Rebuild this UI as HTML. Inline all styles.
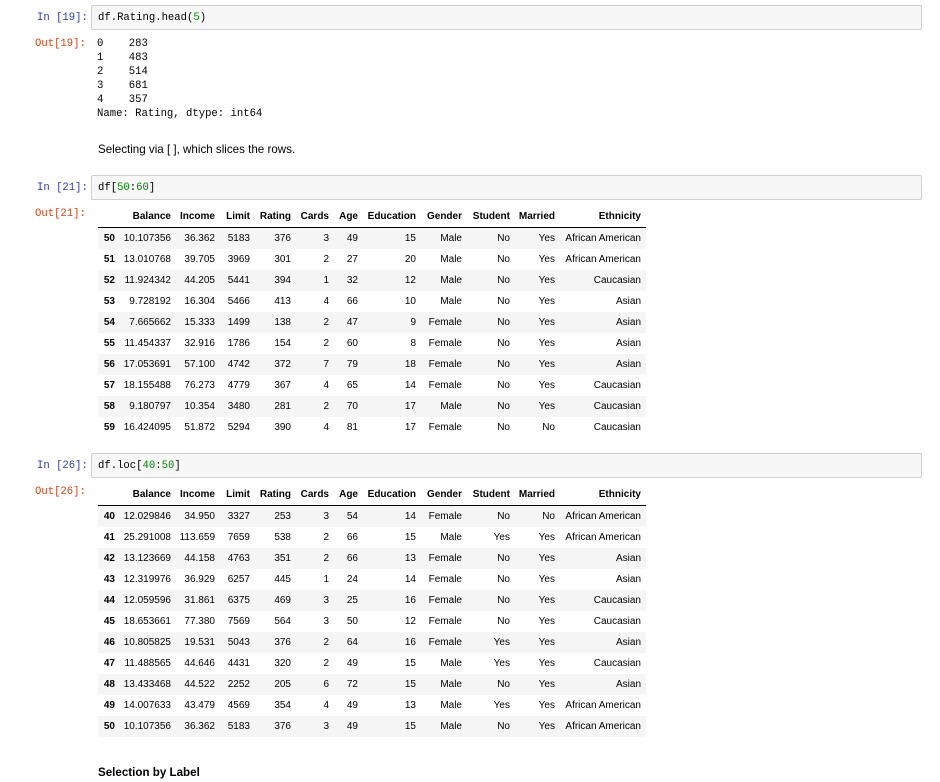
<!DOCTYPE html>
<html><head><style>
body{margin:0;background:#fff;width:940px;height:782px;position:relative;overflow:hidden;font-family:"Liberation Sans",Arial,sans-serif}
.p{position:absolute;font-family:"Liberation Mono",monospace;font-size:10.6px;line-height:14px}
.in{color:#303f9f;left:37px}
.out{color:#d84315;left:35px}
.box{position:absolute;left:91px;width:829px;height:23px;border:1px solid #cfcfcf;background:#f7f7f7;border-radius:2px}
.box>span{position:absolute;left:6px;top:5px;font-family:"Liberation Mono",monospace;font-size:10.6px;line-height:14px;color:#000}
.g{color:#008800}
pre{position:absolute;left:97px;top:37px;margin:0;font-family:"Liberation Mono",monospace;font-size:10.6px;line-height:14px}
table{position:absolute;left:98px;border-collapse:collapse;table-layout:fixed;font-size:10px;width:548px}
td,th{text-align:right;padding:0 5px 0 0;height:21px;white-space:nowrap;overflow:visible}
th{font-weight:bold;height:20px}
thead tr{border-bottom:1px solid #000}
tbody tr:nth-child(odd){background:#f5f5f5}
tbody td:first-child{font-weight:bold}
.t{position:absolute;left:98px;font-size:11.6px}
</style></head><body>
<div class="p in" style="top:11px">In [19]:</div>
<div class="box" style="top:5px"><span>df.Rating.head(<span class="g">5</span>)</span></div>
<div class="p out" style="top:37px">Out[19]:</div>
<pre>0    283
1    483
2    514
3    681
4    357
Name: Rating, dtype: int64</pre>
<div class="t" style="top:143px">Selecting via [ ], which slices the rows.</div>

<div class="p in" style="top:181px">In [21]:</div>
<div class="box" style="top:175px"><span>df[<span class="g">50</span>:<span class="g">60</span>]</span></div>
<div class="p out" style="top:207px">Out[21]:</div>
<table style="top:206px">
<colgroup><col style="width:22px"><col style="width:56px"><col style="width:44px"><col style="width:35px"><col style="width:41px"><col style="width:38px"><col style="width:29px"><col style="width:58px"><col style="width:46px"><col style="width:48px"><col style="width:45px"><col style="width:86px"></colgroup>
<thead><tr><th style="height:21px"></th><th>Balance</th><th>Income</th><th>Limit</th><th>Rating</th><th>Cards</th><th>Age</th><th>Education</th><th>Gender</th><th>Student</th><th>Married</th><th>Ethnicity</th></tr></thead>
<tbody>
<tr><td>50</td><td>10.107356</td><td>36.362</td><td>5183</td><td>376</td><td>3</td><td>49</td><td>15</td><td>Male</td><td>No</td><td>Yes</td><td>African American</td></tr>
<tr><td>51</td><td>13.010768</td><td>39.705</td><td>3969</td><td>301</td><td>2</td><td>27</td><td>20</td><td>Male</td><td>No</td><td>Yes</td><td>African American</td></tr>
<tr><td>52</td><td>11.924342</td><td>44.205</td><td>5441</td><td>394</td><td>1</td><td>32</td><td>12</td><td>Male</td><td>No</td><td>Yes</td><td>Caucasian</td></tr>
<tr><td>53</td><td>9.728192</td><td>16.304</td><td>5466</td><td>413</td><td>4</td><td>66</td><td>10</td><td>Male</td><td>No</td><td>Yes</td><td>Asian</td></tr>
<tr><td>54</td><td>7.665662</td><td>15.333</td><td>1499</td><td>138</td><td>2</td><td>47</td><td>9</td><td>Female</td><td>No</td><td>Yes</td><td>Asian</td></tr>
<tr><td>55</td><td>11.454337</td><td>32.916</td><td>1786</td><td>154</td><td>2</td><td>60</td><td>8</td><td>Female</td><td>No</td><td>Yes</td><td>Asian</td></tr>
<tr><td>56</td><td>17.053691</td><td>57.100</td><td>4742</td><td>372</td><td>7</td><td>79</td><td>18</td><td>Female</td><td>No</td><td>Yes</td><td>Asian</td></tr>
<tr><td>57</td><td>18.155488</td><td>76.273</td><td>4779</td><td>367</td><td>4</td><td>65</td><td>14</td><td>Female</td><td>No</td><td>Yes</td><td>Caucasian</td></tr>
<tr><td>58</td><td>9.180797</td><td>10.354</td><td>3480</td><td>281</td><td>2</td><td>70</td><td>17</td><td>Male</td><td>No</td><td>Yes</td><td>Caucasian</td></tr>
<tr><td>59</td><td>16.424095</td><td>51.872</td><td>5294</td><td>390</td><td>4</td><td>81</td><td>17</td><td>Female</td><td>No</td><td>No</td><td>Caucasian</td></tr>
</tbody></table>

<div class="p in" style="top:459px">In [26]:</div>
<div class="box" style="top:453px"><span>df.loc[<span class="g">40</span>:<span class="g">50</span>]</span></div>
<div class="p out" style="top:485px">Out[26]:</div>
<table style="top:484px">
<colgroup><col style="width:22px"><col style="width:56px"><col style="width:44px"><col style="width:35px"><col style="width:41px"><col style="width:38px"><col style="width:29px"><col style="width:58px"><col style="width:46px"><col style="width:48px"><col style="width:45px"><col style="width:86px"></colgroup>
<thead><tr><th style="height:21px"></th><th>Balance</th><th>Income</th><th>Limit</th><th>Rating</th><th>Cards</th><th>Age</th><th>Education</th><th>Gender</th><th>Student</th><th>Married</th><th>Ethnicity</th></tr></thead>
<tbody>
<tr><td>40</td><td>12.029846</td><td>34.950</td><td>3327</td><td>253</td><td>3</td><td>54</td><td>14</td><td>Female</td><td>No</td><td>No</td><td>African American</td></tr>
<tr><td>41</td><td>25.291008</td><td>113.659</td><td>7659</td><td>538</td><td>2</td><td>66</td><td>15</td><td>Male</td><td>Yes</td><td>Yes</td><td>African American</td></tr>
<tr><td>42</td><td>13.123669</td><td>44.158</td><td>4763</td><td>351</td><td>2</td><td>66</td><td>13</td><td>Female</td><td>No</td><td>Yes</td><td>Asian</td></tr>
<tr><td>43</td><td>12.319976</td><td>36.929</td><td>6257</td><td>445</td><td>1</td><td>24</td><td>14</td><td>Female</td><td>No</td><td>Yes</td><td>Asian</td></tr>
<tr><td>44</td><td>12.059596</td><td>31.861</td><td>6375</td><td>469</td><td>3</td><td>25</td><td>16</td><td>Female</td><td>No</td><td>Yes</td><td>Caucasian</td></tr>
<tr><td>45</td><td>18.653661</td><td>77.380</td><td>7569</td><td>564</td><td>3</td><td>50</td><td>12</td><td>Female</td><td>No</td><td>Yes</td><td>Caucasian</td></tr>
<tr><td>46</td><td>10.805825</td><td>19.531</td><td>5043</td><td>376</td><td>2</td><td>64</td><td>16</td><td>Female</td><td>Yes</td><td>Yes</td><td>Asian</td></tr>
<tr><td>47</td><td>11.488565</td><td>44.646</td><td>4431</td><td>320</td><td>2</td><td>49</td><td>15</td><td>Male</td><td>Yes</td><td>Yes</td><td>Caucasian</td></tr>
<tr><td>48</td><td>13.433468</td><td>44.522</td><td>2252</td><td>205</td><td>6</td><td>72</td><td>15</td><td>Male</td><td>No</td><td>Yes</td><td>Asian</td></tr>
<tr><td>49</td><td>14.007633</td><td>43.479</td><td>4569</td><td>354</td><td>4</td><td>49</td><td>13</td><td>Male</td><td>Yes</td><td>Yes</td><td>African American</td></tr>
<tr><td>50</td><td>10.107356</td><td>36.362</td><td>5183</td><td>376</td><td>3</td><td>49</td><td>15</td><td>Male</td><td>No</td><td>Yes</td><td>African American</td></tr>
</tbody></table>

<div class="t" style="top:766px;font-weight:bold">Selection by Label</div>
</body></html>
